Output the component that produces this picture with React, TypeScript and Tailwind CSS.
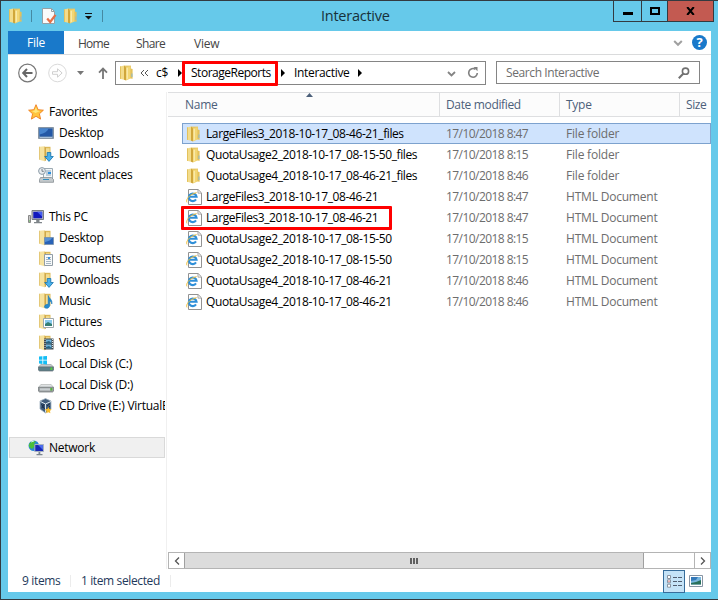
import type { ReactNode } from 'react';

interface NavItem {
  label: string;
  icon: ReactNode;
  root?: boolean;
  selected?: boolean;
}

interface FileEntry {
  name: string;
  modified: string;
  kind: 'File folder' | 'HTML Document';
  selected?: boolean;
  marked?: boolean;
}

function Icon({ children }: { children: ReactNode }) {
  return (
    <svg className="w-4 h-4 shrink-0" viewBox="0 0 16 16">
      {children}
    </svg>
  );
}

function FolderIcon() {
  return (
    <Icon>
      <path d="M5 .6h7v12.6H5z" fill="#e6c665" />
      <path d="M1 1.6L5 .4v14.4l-4-1z" fill="#f3dc8b" />
      <path d="M1 1.6l1-.3v12.8l-1-.3z" fill="#e3c25d" />
      <path d="M5 .6l2 1.8v13.1l-2-.7z" fill="#d0a63a" />
      <path d="M7 2.2l4.6-1v12.2L7 15.6z" fill="#f2d674" />
      <path d="M7.6 3l1.4-.3v11l-1.4.6z" fill="#f9e9a8" />
      <path d="M11.6 3.4l2 .5v9.8l-2-.3z" fill="#e4c15a" />
      <path d="M12.4 8.6h1.1v3.4h-1.1z" fill="#8fb9c9" />
    </Icon>
  );
}

// A library folder, with its emblem drawn in the lower right corner
function LibraryFolder({ children }: { children: ReactNode }) {
  return (
    <Icon>
      <path d="M6 .8h6.5v12H6z" fill="#dcb958" />
      <path d="M8 2.2h3.6v10H8z" fill="#f3dd92" />
      <path d="M1.2.8L6.6.3v15L1.2 13.8z" fill="#f6e3a0" />
      <path d="M6.6.5l1.4 1.3v12.8l-1.4.7z" fill="#cfa84a" />
      <path d="M1.2.8H2v13l-.8-.2z" fill="#dfc06a" />
      {children}
    </Icon>
  );
}

function HtmlIcon() {
  return (
    <Icon>
      <path d="M2.5.5h9.6l3.4 3.4v11.6h-13z" fill="#fff" stroke="#929292" />
      <path d="M12 .7v3.4h3.3" fill="none" stroke="#a5a5a5" />
      <path d="M10 10.4A3.9 3.8 0 1 1 10.6 7.8H3.4" fill="none" stroke="#2f8fd8" strokeWidth="2.1" />
      <path d="M1 13.4C-.4 11 2.7 5.4 10.6 3.6" fill="none" stroke="#eebc37" strokeWidth="1" />
    </Icon>
  );
}

const downArrow = <path d="M9.2 6.5h3.6v4h2.5L11 15.4l-4.3-4.9h2.5z" fill="#48b0ec" stroke="#1572ac" strokeWidth=".8" />;

const screen = (
  <>
    <path d="M.5 2.5h15v11H.5z" fill="#7f99b5" stroke="#8795a4" />
    <path d="M1.5 3.5h13v8h-13z" fill="#2458a6" />
    <path d="M1.5 3.5h9c-1 3-4 5-9 6z" fill="#4885ce" />
    <path d="M2 12.5h12" stroke="#a9c0d9" />
  </>
);

const drive = (
  <>
    <path d="M2.8 7.5h10.4l2.3 3H.5z" fill="#e0e3e4" stroke="#aaaead" strokeWidth=".6" />
    <path d="M.5 10.2h15v4l-1 .8h-13l-1-.8z" fill="#9ba0a2" stroke="#6d7376" strokeWidth=".7" />
    <path d="M2 11.3h10v2.2H2z" fill="#c9cfd1" />
    <path d="M12.5 11h1.7v2.5h-1.7z" fill="#50bd35" />
  </>
);

// The C: drive has the darker, bluish front
const systemDrive = (
  <>
    <path d="M2.8 8.5h10.4l2.3 2.5H.5z" fill="#c3c9cc" stroke="#8f979b" strokeWidth=".6" />
    <path d="M.5 11h15v3.2l-1 .8h-13l-1-.8z" fill="#5d8089" stroke="#5f6a70" strokeWidth=".7" />
    <path d="M12.5 11.5h1.7V14h-1.7z" fill="#50d335" />
  </>
);

const navItems: (NavItem | null)[] = [
  {
    label: 'Favorites',
    root: true,
    icon: (
      <Icon>
        <path d="M8 .7l2.1 5 5.3.5-4 3.6 1.2 5.3L8 12.3l-4.6 2.8 1.2-5.3-4-3.6 5.3-.5z" fill="#ffc43c" stroke="#ef7d1c" strokeWidth=".9" />
        <path d="M8 3l1.2 3.6 2.9.4-4.5 2-3.7-2 2.7-.5z" fill="#ffe77b" />
      </Icon>
    ),
  },
  { label: 'Desktop', icon: <Icon>{screen}</Icon> },
  { label: 'Downloads', icon: <LibraryFolder>{downArrow}</LibraryFolder> },
  {
    label: 'Recent places',
    icon: (
      <Icon>
        <path d="M5.5 1.5h9v10h-9z" fill="#f2f6f9" stroke="#9daab2" />
        <path d="M8 4h5M8 6h2M8 8h5" stroke="#86a3bb" />
        <path d="M10 5h3v2h-3z" fill="#2d8edc" />
        <path d="M2.5 10.5h11l2 2v2.8H1.5v-2.8z" fill="#c4c9cc" stroke="#888f94" strokeWidth=".8" />
        <path d="M5 12.5h6" stroke="#338fc1" />
        <circle cx="4" cy="4" r="3.4" fill="#e8edf1" stroke="#8c9aa6" />
        <path d="M4 2v2.3h1.8" fill="none" stroke="#596570" strokeWidth=".8" />
      </Icon>
    ),
  },
  null,
  {
    label: 'This PC',
    root: true,
    icon: (
      <Icon>
        <path d="M.5 6.5h2v7h-2z" fill="#c8c8c8" stroke="#888" />
        <path d="M1 12h1" stroke="#53b846" />
        <path d="M4 1.5h11.5v9H4z" fill="#b9bdc2" stroke="#777d84" />
        <path d="M5.3 2.8h8.9v6.5H5.3z" fill="#1119bd" />
        <path d="M9 2.8h5.2v5z" fill="#455df0" />
        <path d="M8.2 11h3.3v2H8.2zM6 13h8v1.3H6z" fill="#7f858a" />
      </Icon>
    ),
  },
  {
    label: 'Desktop',
    icon: (
      <LibraryFolder>
        <path d="M6.5 7.5h9v7h-9z" fill="#2862b7" stroke="#7892ac" strokeWidth=".8" />
        <path d="M7 8h7c-1 2-3 3-7 4z" fill="#5791d5" />
      </LibraryFolder>
    ),
  },
  {
    label: 'Documents',
    icon: (
      <LibraryFolder>
        <path d="M6.5 3.5h8v11h-8z" fill="#f8fafb" stroke="#919da6" />
        <path d="M8 6.5h5M8 8.5h5M8 10.5h5M8 12.5h5" stroke="#a7b8c4" />
        <path d="M10 6h2v2h-2z" fill="#3a90d9" />
      </LibraryFolder>
    ),
  },
  { label: 'Downloads', icon: <LibraryFolder>{downArrow}</LibraryFolder> },
  {
    label: 'Music',
    icon: (
      <LibraryFolder>
        <path d="M10.2 2.5c.6 3 4.5 3.8 3.6 8.5-.3-2-1.4-2.9-2.2-3.3v5c0 1.4-1.4 2.6-3 2.6-1.8 0-2.4-1-2-2.2.4-1 1.9-2 3.6-1.7z" fill="#248bd0" stroke="#1673b4" strokeWidth=".6" />
      </LibraryFolder>
    ),
  },
  {
    label: 'Pictures',
    icon: (
      <LibraryFolder>
        <path d="M5.5 4.5h10v9h-10z" fill="#fff" stroke="#9fa8ad" />
        <path d="M7 6h7v6H7z" fill="#8acbf0" />
        <path d="M7 10l3-2 4 2v2H7z" fill="#357e73" />
      </LibraryFolder>
    ),
  },
  {
    label: 'Videos',
    icon: (
      <LibraryFolder>
        <path d="M6 3.5h9.5v11H6z" fill="#41484d" />
        <path d="M8 4.5h5.5v4H8zM8 9.5h5.5v4H8z" fill="#6eb3db" />
        <path d="M8 7l3-1 2.5 2v.5H8zM8 12l3-1 2.5 2v.5H8z" fill="#26617f" />
        <path d="M7 4v10M14.5 4v10" stroke="#dde2e5" strokeDasharray="1 1" />
      </LibraryFolder>
    ),
  },
  {
    label: 'Local Disk (C:)',
    icon: (
      <Icon>
        {systemDrive}
        <path d="M1 .6L4.4.2v3.5H1zM5.2.2L9 0v3.7H5.2zM1 4.5h3.4v3.4L1 7.5zM5.2 4.5H9v3.9L5.2 8z" fill="#14bdf5" />
      </Icon>
    ),
  },
  { label: 'Local Disk (D:)', icon: <Icon>{drive}</Icon> },
  {
    label: 'CD Drive (E:) VirtualBox',
    icon: (
      <Icon>
        <path d="M2 3l5.5-2.4L13 3v8l-5.5 4L2 11z" fill="#405c7b" stroke="#9fb1bf" strokeWidth=".8" />
        <path d="M2.5 3.5l5 2.5L13 3.5M7.5 6v8.5" fill="none" stroke="#d6e4ec" />
        <path d="M3.5 6l3 5M6 6l-2 4M9 8l3-2.5M9 11l3-3" stroke="#182e4c" />
        <path d="M10.3 8.9l1.1 2.1 2.3.3-1.7 1.7.4 2.3-2.1-1.1-2.1 1.1.4-2.3-1.7-1.7 2.3-.3z" fill="#f9bd2d" />
      </Icon>
    ),
  },
  null,
  {
    label: 'Network',
    root: true,
    selected: true,
    icon: (
      <Icon>
        <circle cx="5.8" cy="5.8" r="5.3" fill="#2788d6" />
        <path d="M1 4l3-3 4 .5L6 4l1 2-3 3-3-2z" fill="#4abe3a" />
        <path d="M3 2l3-1" stroke="#d1f4de" />
        <path d="M6.8 4.5h8.7v7H6.8z" fill="#1727b7" stroke="#a9b4c0" />
        <path d="M10 5h5v5z" fill="#4b6bec" />
        <path d="M10.5 12h1.8v2h-1.8zM8.5 14h6v1.2h-6z" fill="#7a858f" />
      </Icon>
    ),
  },
];

const files: FileEntry[] = [
  { name: 'LargeFiles3_2018-10-17_08-46-21_files', modified: '17/10/2018 8:47', kind: 'File folder', selected: true },
  { name: 'QuotaUsage2_2018-10-17_08-15-50_files', modified: '17/10/2018 8:15', kind: 'File folder' },
  { name: 'QuotaUsage4_2018-10-17_08-46-21_files', modified: '17/10/2018 8:46', kind: 'File folder' },
  { name: 'LargeFiles3_2018-10-17_08-46-21', modified: '17/10/2018 8:47', kind: 'HTML Document' },
  { name: 'LargeFiles3_2018-10-17_08-46-21', modified: '17/10/2018 8:47', kind: 'HTML Document', marked: true },
  { name: 'QuotaUsage2_2018-10-17_08-15-50', modified: '17/10/2018 8:15', kind: 'HTML Document' },
  { name: 'QuotaUsage2_2018-10-17_08-15-50', modified: '17/10/2018 8:15', kind: 'HTML Document' },
  { name: 'QuotaUsage4_2018-10-17_08-46-21', modified: '17/10/2018 8:46', kind: 'HTML Document' },
  { name: 'QuotaUsage4_2018-10-17_08-46-21', modified: '17/10/2018 8:46', kind: 'HTML Document' },
];

function TitleBar() {
  return (
    <div className="relative h-[30px] flex items-start justify-between">
      <div className="flex items-center h-[30px] pl-[7px]">
        <FolderIcon />
        <span className="w-px h-3 bg-[#4589a2] ml-[7px]" />
        <svg className="w-4 h-4 ml-[9px]" viewBox="0 0 16 16">
          <path d="M1.5.5h9l3 3v12h-12z" fill="#fafafa" stroke="#96a0a5" />
          <path d="M10.5.5v3h3" fill="none" stroke="#96a0a5" />
          <path d="M6.2 10.5l3 3.4 5.3-7" fill="none" stroke="#e57048" strokeWidth="2.3" />
        </svg>
        <span className="ml-[6px]"><FolderIcon /></span>
        <svg className="w-2 h-2 ml-[6px] mt-0.5" viewBox="0 0 8 8">
          <path d="M0 .5h7" stroke="#111" />
          <path d="M0 3h7L3.5 6.5z" fill="#111" />
        </svg>
        <span className="w-px h-3 bg-[#4589a2] ml-[9px]" />
      </div>
      <h1 className="absolute left-[320px] top-[5px] text-[14.5px] leading-5 tracking-[-0.25px] text-[#17313a]">Interactive</h1>
      <div className="flex h-[21px] mr-1 border border-t-0 border-[#333a40]">
        <button className="w-[28px] flex justify-center items-start pt-[11px] border-r border-[#333a40]">
          <span className="w-2.5 h-[3px] bg-black" />
        </button>
        <button className="w-[26px] flex justify-center items-start pt-1.5 border-r border-[#333a40]">
          <span className="w-2.5 h-2 border-2 border-black" />
        </button>
        <button className="w-[45px] flex justify-center items-center bg-[#c35a51]">
          <svg className="w-[9px] h-2" viewBox="0 0 9 8"><path d="M1.2 0l6.6 8M7.8 0L1.2 8" stroke="#000" strokeWidth="2" /></svg>
        </button>
      </div>
    </div>
  );
}

function RibbonTabs() {
  return (
    <div className="flex h-6 shrink-0 border-b border-[#dadbdc] text-[#444]">
      <div className="w-14 h-[23px] flex items-center justify-center bg-[#1979ca] text-white">File</div>
      <div className="flex items-center w-[58px] pl-[14px] pt-0.5 tracking-[-0.7px]">
        <span className="tracking-[-0.75px]">Home</span>
      </div>
      <div className="flex items-center w-[58px] pl-[14px] pt-0.5 tracking-[-0.6px]">Share</div>
      <div className="flex items-center pl-[14px] pt-0.5">View</div>
      <div className="ml-auto flex items-center gap-[9px] pr-1">
        <svg className="w-2.5 h-2.5" viewBox="0 0 10 10"><path d="M1.2 3l3.8 3.8L8.8 3" fill="none" stroke="#a0a0a0" strokeWidth="2" /></svg>
        <span className="w-[15px] h-[15px] rounded-full bg-[#1979ca] text-white text-[13px] leading-[15px] font-bold text-center">?</span>
      </div>
    </div>
  );
}

function Crumb() {
  return <svg className="w-1 h-2 shrink-0" viewBox="0 0 4 8"><path d="M0 0v8l4-4z" fill="#000" /></svg>;
}

function AddressRow() {
  return (
    <div className="flex h-[37px] shrink-0 pt-1.5 pl-2.5 pr-[11px]">
      <div className="flex h-6 w-[97px] shrink-0 items-center">
        <svg className="w-5 h-5 shrink-0" viewBox="0 0 20 20">
          <circle cx="9.5" cy="10" r="8.8" fill="none" stroke="#777" strokeWidth="1.2" />
          <path d="M14.5 10h-9M9 6l-3.8 4L9 14" fill="none" stroke="#666" strokeWidth="2" />
        </svg>
        <svg className="w-5 h-5 ml-[9px] shrink-0" viewBox="0 0 20 20">
          <circle cx="10.5" cy="10" r="8.8" fill="none" stroke="#dadada" />
          <path d="M5.5 8.7h5V5.8l4.6 4.2-4.6 4.2v-2.9h-5z" fill="none" stroke="#d0d0d0" />
        </svg>
        <svg className="w-2 h-2 ml-2.5 shrink-0" viewBox="0 0 8 8"><path d="M0 2h7L3.5 6z" fill="#777" /></svg>
        <svg className="w-2.5 h-3 ml-[13px] shrink-0" viewBox="0 0 10 12"><path d="M5 12V2M1 5.6l4-4 4 4" fill="none" stroke="#777" strokeWidth="1.8" /></svg>
      </div>
      <div className="relative flex items-center w-[371px] h-6 border border-[#858585] pl-[3px] text-black">
        <FolderIcon />
        <svg className="w-[9px] h-2 ml-[5px] shrink-0" viewBox="0 0 9 8"><path d="M4 1L1 4l3 3M8 1L5 4l3 3" fill="none" stroke="#555" /></svg>
        <span className="ml-[7px] w-[22px]">c$</span>
        <Crumb />
        <span className="ml-[9px] w-[90px] tracking-[-0.48px]">StorageReports</span>
        <Crumb />
        <span className="ml-[9px] w-[64px] tracking-[-0.33px]">Interactive</span>
        <Crumb />
        <svg className="w-[9px] h-[9px] ml-auto mr-[11px]" viewBox="0 0 9 9"><path d="M1 3l3.5 3.5L8 3" fill="none" stroke="#848484" strokeWidth="1.8" /></svg>
        <svg className="w-3 h-3 mr-1.5" viewBox="0 0 12 12">
          <path d="M8.4 2.3A4.3 4.3 0 1 0 10.3 6" fill="none" stroke="#808080" strokeWidth="1.6" />
          <path d="M6.5 0h4v4.2z" fill="#808080" />
        </svg>
        <span className="absolute left-[66px] -top-px w-24 h-[25px] border-3 border-[#ff0000] rounded-[1px]" />
      </div>
      <div className="ml-2.5 flex-1 h-[23px] flex items-center border border-[#858585] pl-[9px] pr-[9px] text-[#6d6d6d]">
        <span className="tracking-[-0.4px]">Search Interactive</span>
        <svg className="ml-auto w-3 h-3" viewBox="0 0 12 12">
          <circle cx="7.5" cy="4.2" r="3.1" fill="none" stroke="#707070" strokeWidth="1.6" />
          <path d="M5.2 6.7L.8 11.2" stroke="#707070" strokeWidth="2" />
        </svg>
      </div>
    </div>
  );
}

function NavPane() {
  return (
    <div className="w-[159px] shrink-0 border-r border-[#f0f0f0] pt-[9px] pl-px pr-px overflow-hidden text-black">
      {navItems.map((item, i) => {
        if (!item) return <div key={i} className="h-[21px]" />;
        return (
          <div
            key={i}
            className={`flex items-center gap-[5px] h-[21px] overflow-hidden whitespace-nowrap ${item.root ? 'pl-[19px]' : 'pl-[29px]'} ${item.selected ? 'bg-[#f0f0f0] outline outline-[#d9d9d9] -outline-offset-1' : ''}`}
          >
            {item.icon}
            <span>{item.label}</span>
          </div>
        );
      })}
    </div>
  );
}

function FileList() {
  return (
    <div className="flex-1 min-w-0 flex flex-col pl-px">
      <div className="relative flex h-[25px] items-center border-y border-[#dedfe1] bg-[#fcfcfc] text-[#4c607a]">
        <svg className="absolute left-[137px] top-0 w-[9px] h-[5px]" viewBox="0 0 9 5"><path d="M1 4l3.5-4L8 4z" fill="#4c607a" /></svg>
        <div className="w-[272px] h-full flex items-center pl-[17px] border-r border-[#dedfe1]">Name</div>
        <div className="w-[120px] h-full flex items-center pl-1.5 border-r border-[#dedfe1] tracking-[-0.35px]">Date modified</div>
        <div className="w-[120px] h-full flex items-center pl-1.5 border-r border-[#dedfe1]">Type</div>
        <div className="pl-1.5 tracking-[-0.4px]">Size</div>
      </div>
      <div className="flex-1 pt-1.5 pl-3.5">
        {files.map((file, i) => (
          <div
            key={i}
            className={`relative flex items-center h-[21px] text-[#6d6d6d] ${file.selected ? 'bg-[#cfe3fd] outline outline-[#7da2ce] -outline-offset-1' : ''}`}
          >
            <div className="w-[264px] flex items-center gap-[4px] pl-1 text-black">
              {file.kind === 'File folder' ? <FolderIcon /> : <HtmlIcon />}
              <span className="tracking-[-0.4px]">{file.name}</span>
            </div>
            <span className="w-[120px] tracking-[-0.56px]">{file.modified}</span>
            <span className="tracking-[-0.2px]">{file.kind}</span>
            {file.marked && <span className="absolute -left-px -top-px w-[211px] h-6 border-3 border-[#ff0000] rounded-[1px]" />}
          </div>
        ))}
      </div>
      <div className="flex h-[17px] shrink-0 border border-[#b4b4b4] bg-white">
        <div className="w-[15px] flex items-center justify-center">
          <svg className="w-[6px] h-2" viewBox="0 0 6 8"><path d="M5 .5L1.5 4 5 7.5" fill="none" stroke="#555" strokeWidth="1.3" /></svg>
        </div>
        <div className="w-[460px] flex items-center justify-center gap-px bg-[#dcdcdc] border-x border-[#a0a0a0]">
          <span className="w-[2px] h-[6px] bg-[#606060]" />
          <span className="w-[2px] h-[6px] bg-[#606060]" />
          <span className="w-[2px] h-[6px] bg-[#606060]" />
        </div>
        <div className="ml-auto w-4 border-l border-[#b4b4b4] flex items-center justify-center">
          <svg className="w-[6px] h-2" viewBox="0 0 6 8"><path d="M1 .5L4.5 4 1 7.5" fill="none" stroke="#555" strokeWidth="1.3" /></svg>
        </div>
      </div>
    </div>
  );
}

function StatusBar() {
  return (
    <div className="flex h-6 shrink-0 items-center pl-[14px] text-[#1e395b]">
      <span className="w-12 tracking-[-0.35px]">9 items</span>
      <span className="w-px h-3 bg-[#ececec]" />
      <span className="ml-2.5 w-[89px] tracking-[-0.38px]">1 item selected</span>
      <span className="w-px h-3 bg-[#ececec]" />
      <div className="ml-auto flex items-center">
        <div className="w-[22px] h-[23px] flex items-center justify-center bg-[#c5e3f7] border border-[#376d9b]">
          <svg className="w-[15px] h-[13px]" viewBox="0 0 15 13">
            <path d="M.5.5h3v3h-3zM.5 4.8h3v3h-3zM.5 9.2h3v3h-3z" fill="#fff" stroke="#8a94a1" />
            <path d="M1.5 5.8h1v1h-1z" fill="#d32424" />
            <path d="M6 2.5h4M11 2.5h4M6 6.5h4M11 6.5h4M6 10.5h4M11 10.5h4" stroke="#515d6f" />
          </svg>
        </div>
        <svg className="w-[14px] h-3 ml-1 mr-2" viewBox="0 0 14 12">
          <path d="M.5.5h13v11H.5z" fill="#fff" stroke="#8794a3" />
          <path d="M2 2h10v7.5H2z" fill="#78b6de" />
          <path d="M2 2h7L7 5 2 6z" fill="#3479b8" />
          <path d="M2 8l5-1 5-2v4.5H2z" fill="#29715b" />
        </svg>
      </div>
    </div>
  );
}

export default function App() {
  return (
    <div className="w-[718px] h-[600px] overflow-hidden border border-[#333a40] border-r-0 bg-[#66c9ea] font-['Open_Sans','Noto_Sans',sans-serif] text-[12px] leading-4 tracking-[-0.25px] whitespace-nowrap">
      <TitleBar />
      <div className="ml-[7px] mr-[7px] h-[561px] flex flex-col bg-white">
        <RibbonTabs />
        <AddressRow />
        <div className="flex h-[477px] shrink-0">
          <NavPane />
          <FileList />
        </div>
        <StatusBar />
      </div>
    </div>
  );
}
